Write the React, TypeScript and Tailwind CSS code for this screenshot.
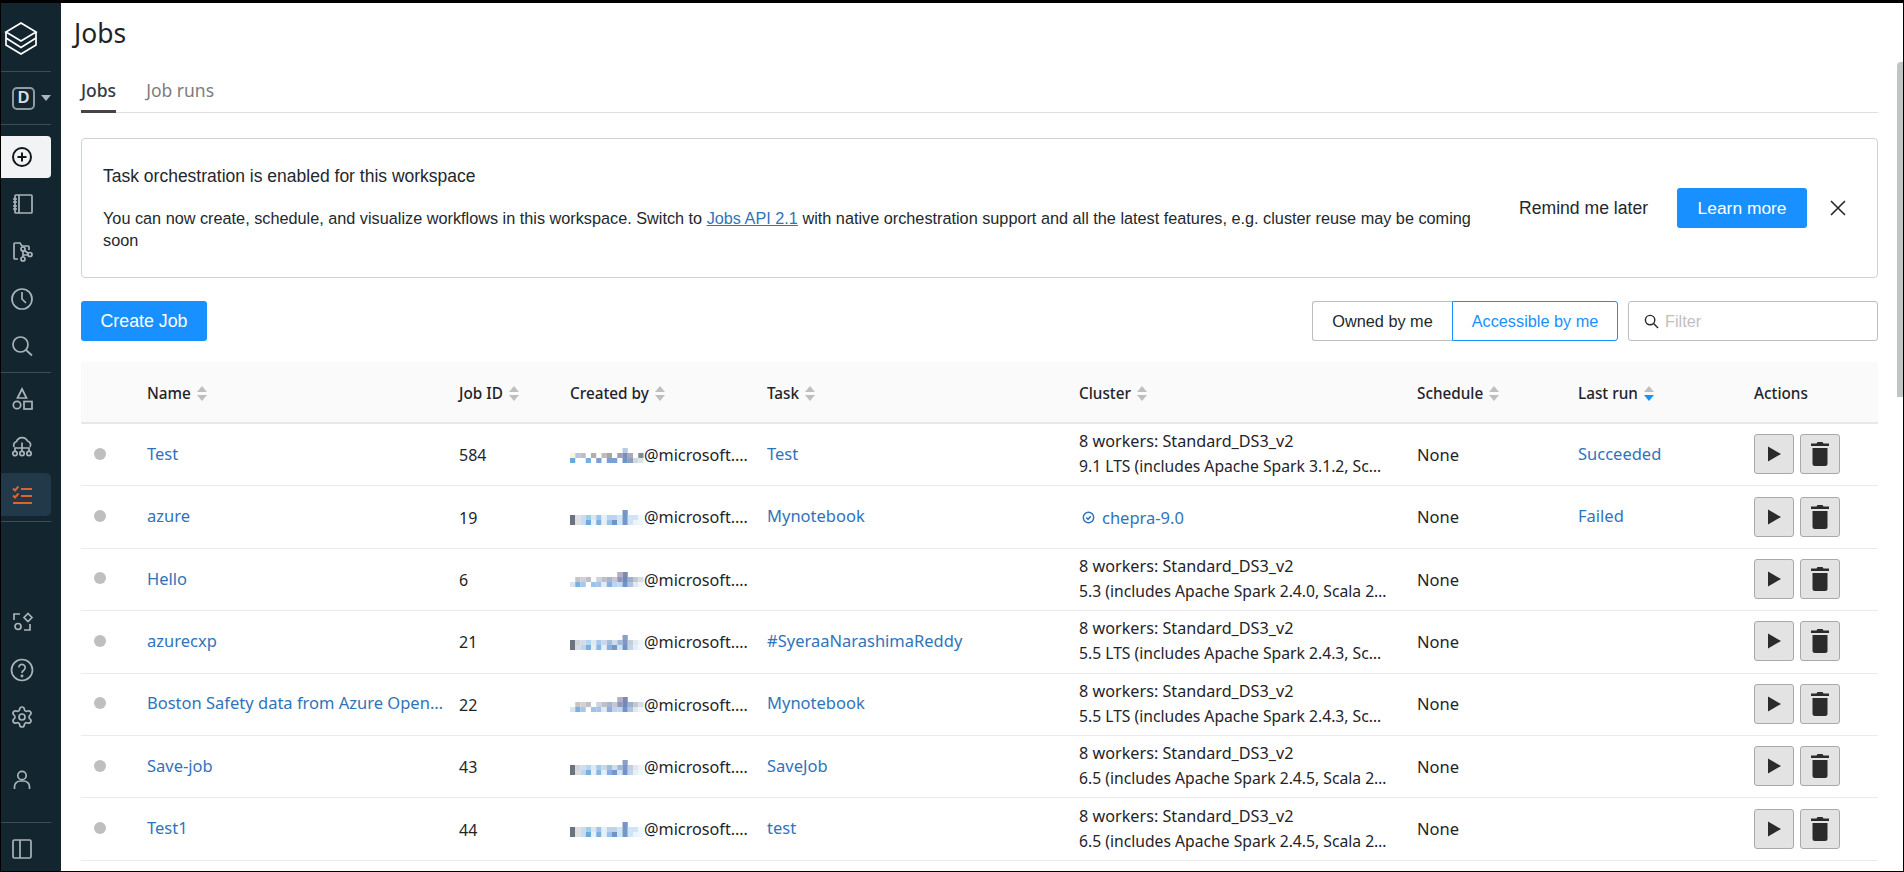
import React from "react";
import { Settings } from "lucide-react";

const ic = "w-6 h-6 fill-none stroke-[#aab4b9] stroke-[1.7]";

function Logo() {
  return (
    <svg viewBox="0 0 34 36" className="w-[34px] h-[36px] fill-none stroke-white stroke-[1.7]">
      <path d="M17 2 32 11 17 20 2 11Z" />
      <path d="M2 11V24L17 33 32 24V11" />
      <path d="M2 17 17 26.500 32 17" />
    </svg>
  );
}

const icons: Record<string, React.ReactNode> = {
  notebook: (
    <svg viewBox="0 0 24 24" className={ic}>
      <rect x="5" y="3" width="17" height="18" rx="1" />
      <path d="M9 3v18M3 7h4M3 10h4M3 14h4M3 17h4" />
    </svg>
  ),
  repo: (
    <svg viewBox="0 0 24 24" className={ic}>
      <path d="M8 20H5a1 1 0 0 1-1-1V5a1 1 0 0 1 1-1h5l2 3h6a1 1 0 0 1 1 1v3" />
      <circle cx="13" cy="10" r="2" />
      <circle cx="20" cy="15.5" r="2" />
      <circle cx="13" cy="20" r="2" />
      <path d="M13 12v6M14.5 11.5l4 3M13 16h5" />
    </svg>
  ),
  clock: (
    <svg viewBox="0 0 24 24" className={ic}>
      <circle cx="12" cy="12" r="10" />
      <path d="M12 5v7l4 4" />
    </svg>
  ),
  search: (
    <svg viewBox="0 0 24 24" className={ic}>
      <circle cx="10.5" cy="10.5" r="7.5" />
      <path d="M16 16l6 5.5" />
    </svg>
  ),
  shapes: (
    <svg viewBox="0 0 24 24" className={ic}>
      <path d="M12 2l4.5 9h-9Z" />
      <circle cx="7" cy="18" r="3.7" />
      <rect x="14" y="14.5" width="8" height="7.5" />
    </svg>
  ),
  cloud: (
    <svg viewBox="0 0 24 24" className={ic}>
      <path d="M4 13a4 4 0 0 1 2.5-5.5A6 6 0 0 1 17.5 7a4 4 0 0 1 2.5 6" />
      <path d="M12 8.5V17M5 17v-3h14v3" />
      <circle cx="5" cy="19.5" r="2.2" />
      <circle cx="12" cy="19.5" r="2.2" />
      <circle cx="19" cy="19.5" r="2.2" />
    </svg>
  ),
  tasks: (
    <svg viewBox="0 0 24 24" className="w-6 h-6 fill-none stroke-[#e0622c] stroke-2">
      <path d="M3 5.5l2 2 3.5-4M3 12.5l2 2 3.5-4" />
      <path d="M11 6h11M11 13h11M3 20h19" />
    </svg>
  ),
  partner: (
    <svg viewBox="0 0 24 24" className={ic}>
      <path d="M10 4H4v6M20 14v6h-6" />
      <path d="M18 3.5l4 4-4 4-4-4Z" />
      <circle cx="8" cy="16.5" r="3" />
    </svg>
  ),
  help: (
    <svg viewBox="0 0 24 24" className={ic}>
      <circle cx="12" cy="12" r="10.5" />
      <path d="M8.8 9.5a3.2 3.2 0 1 1 5 2.7c-1.2.8-1.8 1.3-1.8 2.8" />
      <circle cx="12" cy="18" r=".6" />
    </svg>
  ),
  user: (
    <svg viewBox="0 0 24 24" className={ic}>
      <circle cx="12" cy="7.5" r="4.2" />
      <path d="M4.5 21v-2.5a6 5.5 0 0 1 6-5.5h3a6 5.5 0 0 1 6 5.5V21" />
    </svg>
  ),
  panel: (
    <svg viewBox="0 0 24 24" className={ic}>
      <rect x="3" y="3" width="18" height="18" rx="1.5" />
      <path d="M10 3v18" />
    </svg>
  ),
};

function NavItem({ name }: { name: string }) {
  return <div className="h-[47.5px] pl-[9px] flex items-center">{icons[name]}</div>;
}

const Sep = () => <div className="h-px w-[50px] bg-[#3a4c55] shrink-0" />;

function Sidebar() {
  return (
    <aside className="w-[60px] shrink-0 bg-[#13262f] flex flex-col">
      <div className="h-[68px] pl-[3px] pt-[18px] shrink-0">
        <Logo />
      </div>
      <Sep />
      <div className="h-[52px] pl-[11px] flex items-center gap-[6px] shrink-0">
        <div className="w-[23px] h-[23px] rounded-[5px] border-2 border-[#8d9ca3] flex items-center justify-center text-[#d8dde0] text-[16px] font-bold font-['Liberation_Sans',sans-serif]">
          D
        </div>
        <svg viewBox="0 0 10 6" className="w-[10px] h-[6px] fill-[#aab4b9]">
          <path d="M0 0h10L5 6Z" />
        </svg>
      </div>
      <Sep />
      <div className="mt-[11px] h-[42px] w-[50px] bg-[#f1f3f4] rounded-r-[4px] pl-[9px] flex items-center shrink-0">
        <svg viewBox="0 0 24 24" className="w-6 h-6 fill-none stroke-[#11171c] stroke-2">
          <circle cx="12" cy="12" r="9" />
          <path d="M12 7.5v9M7.5 12h9" />
        </svg>
      </div>
      <div className="h-[2px] shrink-0" />
      <NavItem name="notebook" />
      <NavItem name="repo" />
      <NavItem name="clock" />
      <NavItem name="search" />
      <div className="h-[2px] shrink-0" />
      <Sep />
      <div className="h-[2px] shrink-0" />
      <NavItem name="shapes" />
      <NavItem name="cloud" />
      <div className="h-[43px] w-[50px] mt-[3px] bg-[#22394a] rounded-r-[5px] pl-[9px] flex items-center shrink-0">
        {icons.tasks}
      </div>
      <div className="h-[5px] shrink-0" />
      <Sep />
      <div className="flex-1" />
      <NavItem name="partner" />
      <NavItem name="help" />
      <div className="h-[47.5px] pl-[9px] flex items-center">
        <Settings className="w-6 h-6 text-[#aab4b9]" strokeWidth={1.7} />
      </div>
      <div className="h-[81px] pl-[9px] pb-[3px] flex items-center">{icons.user}</div>
      <Sep />
      <div className="h-[48px] pl-[9px] pt-[4px] flex items-center">{icons.panel}</div>
    </aside>
  );
}

type Mos = (string | null)[][];
const P1: Mos = [
  [null, null, null, null, null, null, null, null, null, null, "#b9c9e8"],
  ["#fbf3dc", "#b7c6e2", "#c2bebe", null, "#b3adad", null, "#c0baba", "#aaa5a5", null, "#a39db5", "#7f8db8", "#b0a8ba", null, "#808a99"],
  ["#6ba8dc", null, null, "#7ab0de", null, "#7f9fd0", null, "#7ba0d4", "#7ba0d4", null, "#6f94cc", "#8ba0bb", "#cfd8e0", "#dde3e8"],
];
const P2: Mos = [
  [null, null, null, null, null, null, null, null, null, null, "#7596c8"],
  ["#6b7280", "#e0e0e0", "#c9dbef", "#9cceee", "#d6e6f5", "#9cc4ea", "#e4eff8", "#bcd4ee", "#bcd4ee", "#cfe6f7", "#7596c8", "#d0e4f6", "#d0e4f6", "#f0f7fc"],
  ["#6b7280", "#e0e0e0", "#c9dbef", "#6ba8dc", "#e4eff8", "#7ab0de", "#e4eff8", "#9cc4ea", "#6f94cc", "#cfe6f7", "#7596c8", "#d0e4f6", "#eaf4fc", "#f0f7fc"],
];
const P3: Mos = [
  [null, null, null, null, null, null, null, null, null, "#b0b0c8", "#8088b0"],
  [null, "#c8c4c4", "#d0d0d8", "#c0c0c8", null, "#c8d4e4", "#c0bcc8", "#a8b4d0", "#c8c8d4", "#9098b4", "#7088bc", "#9fb0cc", "#c0c8d4", "#d8dce4"],
  ["#d8e4f0", "#7ab0de", "#a8c8e8", null, "#9cc4ea", "#a8c4e4", "#e0ecf6", "#8aaede", "#bcd4ee", "#c0d8f0", "#6f94cc", "#b0c4dc", "#e0e8f0", "#f0f4f8"],
];
const P4: Mos = [
  [null, null, null, null, null, null, null, null, null, null, "#8aa0cc"],
  ["#6b7280", "#cfd4dc", "#d4dce8", "#b8d4f0", "#e0e8f0", "#a8c8ec", "#c8d8ea", "#a4bce0", "#d0dcec", "#a0b8dc", "#7f94c4", "#c4cedc", "#e0e8f0", "#f0f4f8"],
  ["#6b7280", "#d8dce0", "#c0d4ea", "#7ab0de", "#e4eff8", "#8ab8e4", "#e4eff8", "#8aaede", "#7596c8", "#d0e4f6", "#6f94cc", "#c0d4ea", "#e4eff8", "#f0f7fc"],
];

function Mosaic({ p }: { p: Mos }) {
  return (
    <svg viewBox="0 0 74 15" className="w-[74px] h-[15px] shrink-0">
      {p.map((row, y) =>
        row.map((c, x) => (c ? <rect key={`${x}-${y}`} x={x * 5.25} y={y * 5} width="5.25" height="5" fill={c} /> : null))
      )}
    </svg>
  );
}

function SortIcon({ active }: { active?: boolean }) {
  return (
    <svg viewBox="0 0 10 15" className="w-[10px] h-[15px] ml-[6px]">
      <path d="M5 0l5 6H0Z" fill="#bfbfbf" />
      <path d="M0 9h10l-5 6Z" fill={active ? "#1890ff" : "#bfbfbf"} />
    </svg>
  );
}

const cols = "grid grid-cols-[66px_312px_111px_197px_312px_338px_161px_176px_124px]";
const link = "text-[#2f74bb]";

type Row = {
  name: string;
  id: string;
  mos: Mos;
  task: string;
  c1?: string;
  c2?: string;
  running?: string;
  last?: string;
};

const rows: Row[] = [
  { name: "Test", id: "584", mos: P1, task: "Test", c1: "8 workers: Standard_DS3_v2", c2: "9.1 LTS (includes Apache Spark 3.1.2, Sc…", last: "Succeeded" },
  { name: "azure", id: "19", mos: P2, task: "Mynotebook", running: "chepra-9.0", last: "Failed" },
  { name: "Hello", id: "6", mos: P3, task: "", c1: "8 workers: Standard_DS3_v2", c2: "5.3 (includes Apache Spark 2.4.0, Scala 2…" },
  { name: "azurecxp", id: "21", mos: P4, task: "#SyeraaNarashimaReddy", c1: "8 workers: Standard_DS3_v2", c2: "5.5 LTS (includes Apache Spark 2.4.3, Sc…" },
  { name: "Boston Safety data from Azure Open…", id: "22", mos: P3, task: "Mynotebook", c1: "8 workers: Standard_DS3_v2", c2: "5.5 LTS (includes Apache Spark 2.4.3, Sc…" },
  { name: "Save-job", id: "43", mos: P4, task: "SaveJob", c1: "8 workers: Standard_DS3_v2", c2: "6.5 (includes Apache Spark 2.4.5, Scala 2…" },
  { name: "Test1", id: "44", mos: P2, task: "test", c1: "8 workers: Standard_DS3_v2", c2: "6.5 (includes Apache Spark 2.4.5, Scala 2…" },
];

function ActionBtn({ children }: { children: React.ReactNode }) {
  return (
    <button className="w-[40px] h-[40px] bg-[#e3e3e3] border border-[#a9a9a9] rounded-[3px] flex items-center justify-center">
      {children}
    </button>
  );
}

function TableRow({ r }: { r: Row }) {
  return (
    <div className={`${cols} h-[62.4px] items-center border-b border-[#ebebeb] text-[16.5px] text-[#1f2429]`}>
      <div className="pl-[13px]">
        <div className="w-3 h-3 rounded-full bg-[#bfbfbf] -mt-[2px]" />
      </div>
      <div className={`${link} -mt-[1px]`}>{r.name}</div>
      <div className="text-[16px] mt-[1px]">{r.id}</div>
      <div className="flex items-center mt-[1px]">
        <Mosaic p={r.mos} />
        <span className="text-[16.2px]">@microsoft.…</span>
      </div>
      <div className={`${link} -mt-[1px]`}>{r.task}</div>
      <div className="leading-[25px] -mt-[1px] whitespace-nowrap">
        {r.running ? (
          <div className="flex items-center gap-[7px] pl-[3px] mt-[2px]">
            <svg viewBox="0 0 14 14" className="w-[13px] h-[13px] fill-none stroke-[#2f74bb] stroke-[1.6]">
              <circle cx="7" cy="7" r="5.6" />
              <path d="M4.5 7l2 2 3-3.4" />
            </svg>
            <span className={link}>{r.running}</span>
          </div>
        ) : (
          <>
            <div className="text-[16.2px]">{r.c1}</div>
            <div className="text-[15.7px]">{r.c2}</div>
          </>
        )}
      </div>
      <div className="mt-[1px]">None</div>
      <div className={`${link} -mt-[1px]`}>{r.last}</div>
      <div className="flex gap-[6px] -mt-[1px]">
        <ActionBtn>
          <svg viewBox="0 0 14 16" className="w-[13px] h-[16px] fill-[#2b2b2b]">
            <path d="M0 0l14 8-14 8Z" />
          </svg>
        </ActionBtn>
        <ActionBtn>
          <svg viewBox="0 0 18 24" className="w-[18px] h-[24px] fill-[#2b2b2b]">
            <path d="M6.5 0h5l1 1.5H18v2.5H0V1.500h5.500Z" />
            <path d="M1.500 6h15v15.500A2.500 2.500 0 0 1 14 24H4a2.500 2.500 0 0 1-2.500-2.500Z" />
          </svg>
        </ActionBtn>
      </div>
    </div>
  );
}

function Head({ label, sort, active }: { label: string; sort?: boolean; active?: boolean }) {
  return (
    <div className="flex items-center pt-[2px] text-[15.3px] font-medium text-[#1f2429]">
      <span>{label}</span>
      {sort && <SortIcon active={active} />}
    </div>
  );
}

export default function App() {
  return (
    <div className="w-[1904px] h-[872px] overflow-hidden flex border-t-[3px] border-l border-r border-b border-black bg-white font-['Noto_Sans',sans-serif]">
      <Sidebar />
      <main className="flex-1 min-w-0 pl-[20px] pr-[19px]">
        <h1 className="text-[26.4px] leading-[32px] mt-[14px] -ml-[7px] text-[#1f2429] font-normal">Jobs</h1>
        <div className="flex gap-[30px] mt-[12px] h-[52px] border-b border-[#dcdfe3] text-[17.5px]">
          <div className="h-[52px] border-b-[3px] border-[#47434a] pt-[17px] leading-[24px] text-[#333a42] font-medium">Jobs</div>
          <div className="pt-[17px] leading-[24px] text-[#7d7d7d] font-normal">Job runs</div>
        </div>

        <section className="mt-[25px] h-[140px] border border-[#ccd3da] rounded-[4px] flex items-start pl-[21px] font-['Liberation_Sans',sans-serif] text-[#23282d]">
          <div className="w-[1372px] pt-[25px] shrink-0">
            <div className="text-[17.5px] leading-[24px]">Task orchestration is enabled for this workspace</div>
            <p className="text-[16.25px] leading-[22px] mt-[19px]">
              You can now create, schedule, and visualize workflows in this workspace. Switch to{" "}
              <span className="text-[#2f74bb] underline">Jobs API 2.1</span> with native orchestration support and all
              the latest features, e.g. cluster reuse may be coming soon
            </p>
          </div>
          <div className="h-[136px] flex items-center pt-[2px]">
            <div className="ml-[44px] text-[17.6px] whitespace-nowrap">Remind me later</div>
            <button className="ml-[29px] w-[130px] h-[40px] rounded-[3px] bg-[#1890ff] text-white text-[17.4px]">
              Learn more
            </button>
            <svg viewBox="0 0 16 16" className="ml-[23px] w-[16px] h-[16px] stroke-[#23282d] stroke-[1.6]">
              <path d="M1 1l14 14M15 1L1 15" />
            </svg>
          </div>
        </section>

        <div className="mt-[23px] flex items-center font-['Liberation_Sans',sans-serif]">
          <button className="w-[126px] h-[40px] rounded-[3px] bg-[#1890ff] text-white text-[17.8px]">Create Job</button>
          <div className="flex-1" />
          <div className="flex text-[16.3px]">
            <div className="w-[140px] h-[40px] border border-[#bdbdbd] border-r-0 rounded-l-[3px] flex items-center justify-center text-[#23282d]">
              Owned by me
            </div>
            <div className="w-[166px] h-[40px] border border-[#1890ff] rounded-r-[3px] flex items-center justify-center text-[#1890ff]">
              Accessible by me
            </div>
          </div>
          <div className="ml-[10px] w-[250px] h-[40px] border border-[#bdbdbd] rounded-[3px] flex items-center pl-[15px] gap-[6px] text-[16.3px] text-[#bfbfbf]">
            <svg viewBox="0 0 16 16" className="w-[15px] h-[15px] fill-none stroke-[#23282d] stroke-[1.5]">
              <circle cx="6.500" cy="6.500" r="5" />
              <path d="M10.500 10.500L15 15" />
            </svg>
            Filter
          </div>
        </div>

        <div className="mt-[21px]">
          <div className={`${cols} h-[62px] items-center bg-[#fafafa] border-b-2 border-[#e8e8e8]`}>
            <div />
            <Head label="Name" sort />
            <Head label="Job ID" sort />
            <Head label="Created by" sort />
            <Head label="Task" sort />
            <Head label="Cluster" sort />
            <Head label="Schedule" sort />
            <Head label="Last run" sort active />
            <Head label="Actions" />
          </div>
          {rows.map((r) => (
            <TableRow key={r.name} r={r} />
          ))}
        </div>
      </main>
      <div className="w-[6px] shrink-0 pt-[59px]">
        <div className="h-[335px] w-[6px] bg-[#c1c5c5] rounded-tl-[4px]" />
      </div>
    </div>
  );
}
